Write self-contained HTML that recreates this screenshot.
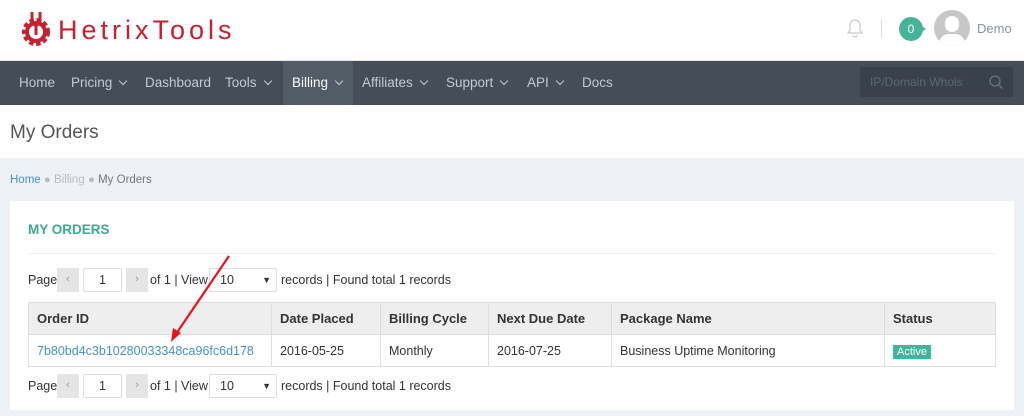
<!DOCTYPE html><html><head><style>
*{box-sizing:border-box;margin:0;padding:0}
body{width:1024px;height:416px;overflow:hidden;background:#eef1f5;font-family:"Liberation Sans",sans-serif;font-size:12.5px;color:#333;position:relative;white-space:nowrap}
.hdr{position:absolute;top:0;left:0;width:1024px;height:61px;background:#fff;border-bottom:1px solid #e4e4e4}
.nav{position:absolute;top:61px;left:0;width:1024px;height:44px;background:#444d58}
.nav span{position:absolute;top:0;line-height:44px;color:#c3cad3;font-size:13.5px}
.ch{display:inline-block;width:6px;height:6px;border-right:1.2px solid #c3cad3;border-bottom:1.2px solid #c3cad3;transform:rotate(45deg);margin-left:8px;position:relative;top:-3px}
.title{position:absolute;top:105px;left:0;width:1024px;height:53px;background:#fff}
.pg{position:absolute;left:28px;height:24px;font-size:12.5px;color:#333;width:600px}
.pg *{position:absolute;top:0}
.btn{width:22px;height:24px;background:#e5e5e5;color:#999;text-align:center;line-height:22px;font-size:11px}
.inp{width:39px;height:24px;border:1px solid #ddd;background:#fff;text-align:center;line-height:22px;border-radius:2px}
.sel{width:68px;height:24px;border:1px solid #ddd;background:#fff;line-height:22px;padding-left:10px;border-radius:2px}
table{position:absolute;left:28px;top:302px;width:968px;border-collapse:collapse}
td,th{border:1px solid #ddd;height:32px;padding:0 8px;text-align:left;font-size:12.5px}
th{background:#eee;font-weight:bold;color:#333;font-size:13px}
</style></head><body>
<div class="hdr">
<svg style="position:absolute;left:20px;top:10px" width="32" height="38" viewBox="0 0 32 38"><circle cx="16" cy="22" r="11" fill="none" stroke="#c8202f" stroke-width="6" stroke-dasharray="4 2.5"/><circle cx="16" cy="22" r="9" fill="none" stroke="#c8202f" stroke-width="4"/><path d="M12 2v10l4 4 4-4V2" fill="none" stroke="#c8202f" stroke-width="3"/><rect x="14.5" y="13" width="3" height="12" fill="#c8202f"/></svg>
<div style="position:absolute;left:58px;top:15px;font-size:27px;color:#c8202f;letter-spacing:4px">HetrixTools</div>
<svg style="position:absolute;left:846px;top:18px" width="18" height="20" viewBox="0 0 18 20"><path d="M9 2c-3 0-5 2.5-5 5.5V12l-2 3h14l-2-3V7.5C14 4.5 12 2 9 2zM7 17a2 2 0 0 0 4 0" fill="none" stroke="#ccc" stroke-width="1.3"/></svg>
<div style="position:absolute;left:881px;top:20px;width:1px;height:18px;background:#ddd"></div>
<div style="position:absolute;left:899px;top:17px;width:24px;height:24px;border-radius:12px;background:#45b29a;color:#fff;text-align:center;line-height:24px;font-size:12px">0</div>
<div style="position:absolute;left:920px;top:25px;border-left:6px solid #45b29a;border-top:4px solid transparent;border-bottom:4px solid transparent"></div>
<div style="position:absolute;left:934px;top:10px;width:36px;height:36px;border-radius:18px;background:#c7c7c7;overflow:hidden"><div style="position:absolute;left:11px;top:6px;width:14px;height:16px;border-radius:7px;background:#fff"></div><div style="position:absolute;left:5px;top:24px;width:26px;height:20px;border-radius:13px;background:#fff"></div></div>
<div style="position:absolute;left:977px;top:21px;color:#8494a9;font-size:13px">Demo</div>
</div>
<div class="nav">
<span style="left:19px">Home</span>
<span style="left:71px">Pricing<i class="ch"></i></span>
<span style="left:145px">Dashboard</span>
<span style="left:225px">Tools<i class="ch"></i></span>
<span style="left:283px;width:70px;background:#525c67;padding-left:9px;color:#fff">Billing<i class="ch"></i></span>
<span style="left:362px">Affiliates<i class="ch"></i></span>
<span style="left:446px">Support<i class="ch"></i></span>
<span style="left:527px">API<i class="ch"></i></span>
<span style="left:582px">Docs</span>
<div style="position:absolute;left:860px;top:6px;width:153px;height:30px;background:#3a414a;border-radius:2px;color:#5e6773;font-size:12px;line-height:30px;padding-left:10px">IP/Domain Whois
<svg style="position:absolute;right:10px;top:8px" width="14" height="14"><circle cx="6" cy="6" r="5" fill="none" stroke="#6b7480" stroke-width="1.3"/><path d="M10 10l3.5 3.5" stroke="#6b7480" stroke-width="1.3"/></svg></div>
</div>
<div class="title"><div style="position:absolute;left:10px;top:17px;font-size:19px;color:#555">My Orders</div></div>
<div style="position:absolute;left:10px;top:174px;font-size:11.5px;color:#999"><span style="color:#4a8fcc">Home</span> <span style="color:#bbb">●</span> <span style="color:#bbb">Billing</span> <span style="color:#bbb">●</span> <span style="color:#777">My Orders</span></div>
<div style="position:absolute;left:10px;top:201px;width:1004px;height:209px;background:#fff"></div>
<div style="position:absolute;left:28px;top:222px;font-size:13.5px;font-weight:bold;color:#3fa893">MY ORDERS</div>
<div style="position:absolute;left:28px;top:253px;width:968px;height:1px;background:#eee"></div>
<div class="pg" style="top:268px"><span style="left:0;line-height:24px">Page</span><div class="btn" style="left:29px">&lsaquo;</div><div class="inp" style="left:55px">1</div><div class="btn" style="left:98px">&rsaquo;</div><span style="left:122px;line-height:24px">of 1 | View</span><div class="sel" style="left:181px">10<span style="right:5px;font-size:9px;color:#333">▼</span></div><span style="left:253px;line-height:24px">records | Found total 1 records</span></div>
<table><tr><th style="width:243px">Order ID</th><th style="width:109px">Date Placed</th><th style="width:108px">Billing Cycle</th><th style="width:123px">Next Due Date</th><th style="width:273px">Package Name</th><th>Status</th></tr>
<tr><td style="color:#4a8fcc">7b80bd4c3b10280033348ca96fc6d178</td><td>2016-05-25</td><td>Monthly</td><td>2016-07-25</td><td>Business Uptime Monitoring</td><td><span style="background:#3fb59c;color:#fff;font-size:11px;padding:1px 4px">Active</span></td></tr></table>
<div class="pg" style="top:374px"><span style="left:0;line-height:24px">Page</span><div class="btn" style="left:29px">&lsaquo;</div><div class="inp" style="left:55px">1</div><div class="btn" style="left:98px">&rsaquo;</div><span style="left:122px;line-height:24px">of 1 | View</span><div class="sel" style="left:181px">10<span style="right:5px;font-size:9px;color:#333">▼</span></div><span style="left:253px;line-height:24px">records | Found total 1 records</span></div>
<svg style="position:absolute;left:0;top:0" width="1024" height="416"><path d="M229 256L176 334" stroke="#e8141c" stroke-width="2.2"/><path d="M171 342l2-14 8 5z" fill="#e8141c"/></svg>
</body></html>
